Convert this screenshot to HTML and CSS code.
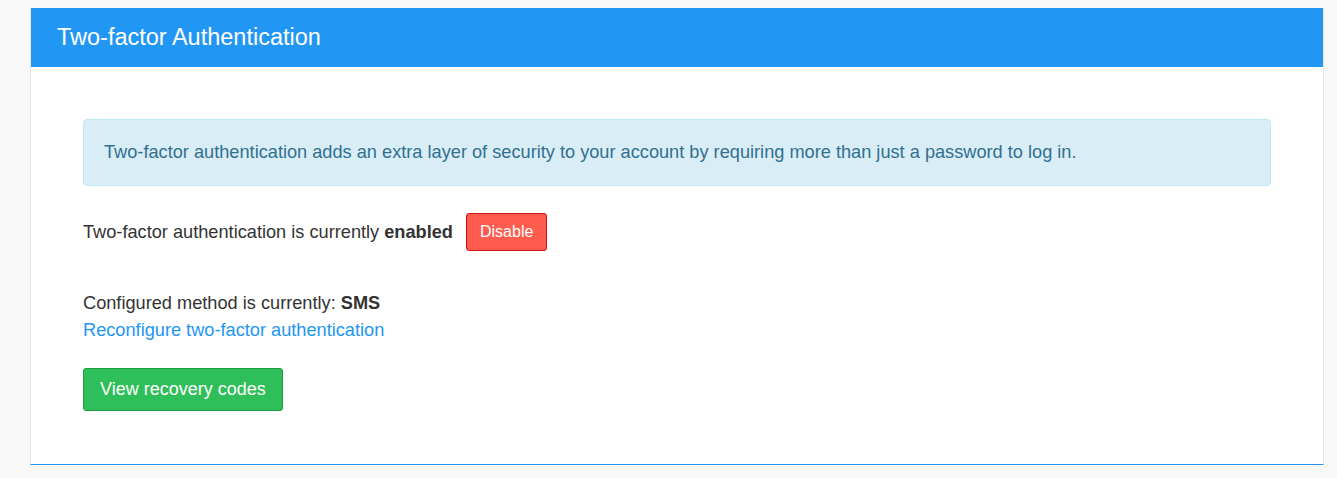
FILE: index.html
```html
<!DOCTYPE html>
<html>
<head>
<meta charset="utf-8">
<link rel="stylesheet" href="styles.css">
</head>
<body>
<div class="panel">
  <div class="panel-heading">Two-factor Authentication</div>
  <div class="panel-body">
    <div class="alert">Two-factor authentication adds an extra layer of security to your account by requiring more than just a password to log in.</div>
    <div class="status-row">
      <span>Two-factor authentication is currently <strong>enabled</strong></span>
      <button class="btn btn-danger">Disable</button>
    </div>
    <div class="method">
      <div class="line">Configured method is currently: <strong>SMS</strong></div>
      <div class="line"><a class="link" href="#">Reconfigure two-factor authentication</a></div>
    </div>
    <button class="btn btn-success">View recovery codes</button>
  </div>
</div>
</body>
</html>
```
FILE: styles.css
```css
html, body {
  margin: 0;
  padding: 0;
  background: #f8f8f8;
  font-family: "Liberation Sans", Arial, sans-serif;
  color: #333;
}
body {
  padding: 8px 13px 0 30px;
}
.panel {
  background: #fff;
  border-left: 1px solid #e6e6e6;
  border-right: 1px solid #e6e6e6;
  border-bottom: 1px solid #2196f3;
}
.panel-heading {
  background: #2196f3;
  color: #fff;
  height: 59px;
  display: flex;
  align-items: center;
  padding-left: 26px;
  font-size: 23.5px;
}
.panel-body {
  padding: 52px 52px 53px 52px;
}
.alert {
  background: #d9edf7;
  border: 1px solid #bce8f1;
  border-radius: 4px;
  color: #31708f;
  font-size: 18.2px;
  line-height: 25px;
  padding: 20px 20px;
}
.status-row {
  margin-top: 27px;
  display: flex;
  align-items: center;
  font-size: 18.2px;
}
.status-row strong { font-weight: bold; }
.btn {
  font-family: "Liberation Sans", Arial, sans-serif;
  color: #fff;
  border-radius: 3px;
  cursor: pointer;
}
.btn-danger {
  margin-left: 13px;
  background: #ff5b4f;
  border: 1px solid #d01010;
  font-size: 16px;
  line-height: 20px;
  padding: 8px 13px;
}
.method {
  margin-top: 39px;
  font-size: 18.2px;
}
.line {
  line-height: 27px;
}
.link {
  color: #2196f3;
  text-decoration: none;
}
.btn-success {
  display: block;
  margin-top: 24px;
  background: #2fbf5a;
  border: 1px solid #1d9e3c;
  font-size: 18px;
  line-height: 25px;
  padding: 8px 16px;
}
```
